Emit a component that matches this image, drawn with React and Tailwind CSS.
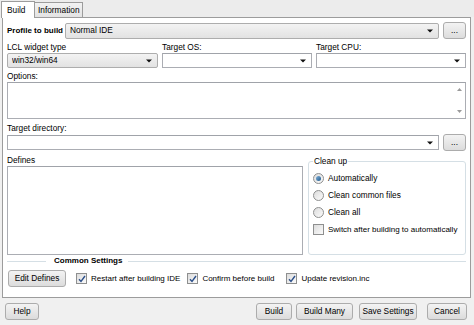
const FONT = { fontFamily: '"Liberation Sans", Arial, sans-serif' }

function Arrow() {
  return (
    <svg width="6" height="4" viewBox="0 0 6 4" className="shrink-0">
      <path d="M0 0.5h6L3 3.5z" fill="#111" />
    </svg>
  )
}

function Combo({ value, gray, className = '' }) {
  return (
    <div
      className={
        'flex items-center pl-[4px] pr-[5px] border text-[8.3px] text-black ' +
        (gray
          ? 'border-[#adadad] bg-gradient-to-b from-[#f3f3f3] to-[#e2e2e2] rounded-[2px] '
          : 'border-[#abadb3] border-t-[#a0a3a9] bg-white ') +
        className
      }
    >
      <span className="flex-1 leading-none truncate">{value}</span>
      <Arrow />
    </div>
  )
}

function Btn({ children, className = '' }) {
  return (
    <div
      className={
        'h-[17px] flex items-center justify-center border border-[#acacac] rounded-[3px] bg-gradient-to-b from-[#f3f3f3] to-[#dcdcdc] text-[8.3px] text-black leading-none ' +
        className
      }
    >
      {children}
    </div>
  )
}

function Radio({ checked, label }) {
  return (
    <div className="flex items-center gap-[4px] h-[17px]">
      <div className="w-[11px] h-[11px] rounded-full border border-[#8e8f8f] bg-gradient-to-br from-[#dcdcdc] to-[#fbfbfb] flex items-center justify-center">
        {checked && <div className="w-[5px] h-[5px] rounded-full bg-gradient-to-br from-[#7fb0d8] to-[#1f5a8c]" />}
      </div>
      <span className="text-[8.3px] text-black leading-none">{label}</span>
    </div>
  )
}

function Check({ label, checked }) {
  return (
    <div className="flex items-center gap-[4px]">
      <div className="w-[11px] h-[11px] border border-[#8e8f8f] bg-gradient-to-br from-[#dcdcdc] to-[#fbfbfb] flex items-center justify-center">
        {checked && (
          <svg width="8" height="8" viewBox="0 0 8 8">
            <path d="M1 4.3l2 2.2L7 1" fill="none" stroke="#2b4f8a" strokeWidth="1.4" />
          </svg>
        )}
      </div>
      <span className="text-[8px] text-black leading-none whitespace-nowrap">{label}</span>
    </div>
  )
}

function ScrollArrows() {
  return (
    <div className="w-[11px] flex flex-col justify-between items-center py-[5px]">
      <svg width="5" height="3" viewBox="0 0 5 3">
        <path d="M0 3h5L2.5 0z" fill="#9a9a9a" />
      </svg>
      <svg width="5" height="3" viewBox="0 0 5 3">
        <path d="M0 0h5L2.5 3z" fill="#9a9a9a" />
      </svg>
    </div>
  )
}

export default function App() {
  return (
    <div className="w-[474px] h-[325px] bg-[#f0f0f0] flex flex-col overflow-hidden" style={FONT}>
      {/* tabs */}
      <div className="h-[17px] flex items-end pl-[1px] bg-[#ececec]">
        <div className="h-[17px] w-[34px] bg-white border border-b-0 border-[#9c9c9c] flex items-center pl-[5px] text-[8.3px] text-black -mb-px relative z-10">
          Build
        </div>
        <div className="h-[15px] w-[48px] bg-gradient-to-b from-[#f2f2f2] to-[#e3e3e3] border border-l-0 border-b-0 border-[#9c9c9c] flex items-center pl-[3px] text-[8.3px] text-black">
          Information
        </div>
      </div>

      {/* panel */}
      <div className="h-[281px] ml-[2px] mr-[3px] bg-white border border-[#9c9c9c] px-[4px] pt-[4px] flex flex-col">
        <div className="flex items-center">
          <span className="text-[8px] font-bold text-black w-[58px]">Profile to build</span>
          <Combo value="Normal IDE" gray className="flex-1 h-[16px]" />
          <Btn className="w-[23px] h-[16px] ml-[4px] text-[#666]">...</Btn>
        </div>

        <div className="grid grid-cols-[151px_150px_1fr] gap-x-[4px] mt-[2px]">
          <span className="text-[8.3px] text-black h-[12px] leading-[12px]">LCL widget type</span>
          <span className="text-[8.3px] text-black h-[12px] leading-[12px]">Target OS:</span>
          <span className="text-[8.3px] text-black h-[12px] leading-[12px]">Target CPU:</span>
          <Combo value="win32/win64" gray className="h-[15px]" />
          <Combo value="" className="h-[15px]" />
          <Combo value="" className="h-[15px]" />
        </div>

        <span className="text-[8.3px] text-black mt-[2px] h-[12px] leading-[12px]">Options:</span>
        <div className="h-[37px] border border-[#abadb3] border-t-[#a0a3a9] bg-white flex justify-end">
          <ScrollArrows />
        </div>

        <span className="text-[8.3px] text-black mt-[3px] h-[12px] leading-[12px]">Target directory:</span>
        <div className="flex items-center">
          <Combo value="" className="flex-1 h-[15px]" />
          <Btn className="w-[23px] h-[16px] ml-[4px] text-[#666]">...</Btn>
        </div>

        <div className="flex gap-[5px] mt-[3px]">
          <div className="w-[296px] flex flex-col">
            <span className="text-[8.3px] text-black h-[12px] leading-[12px]">Defines</span>
            <div className="h-[89px] border border-[#abadb3] border-t-[#a0a3a9] bg-white" />
          </div>
          <div className="flex-1 relative mt-[7px] h-[94px] border border-[#d5dfe5] rounded-[3px] px-[4px] pt-[8px]">
            <span className="absolute -top-[7px] left-[4px] bg-white px-[1px] text-[8.3px] leading-[12px] text-black">Clean up</span>
            <Radio checked label="Automatically" />
            <Radio label="Clean common files" />
            <Radio label="Clean all" />
            <div className="h-[17px] flex items-center">
              <Check label="Switch after building to automatically" />
            </div>
          </div>
        </div>

        <div className="flex items-center h-[12px]">
          <div className="w-[39px] h-px bg-[#d5dfe5]" />
          <span className="text-[8px] font-bold text-black pl-[8px] pr-[6px] leading-none">Common Settings</span>
          <div className="flex-1 h-px bg-[#d5dfe5]" />
        </div>

        <div className="flex items-center mt-[3px]">
          <Btn className="w-[58px] ml-px">Edit Defines</Btn>
          <div className="ml-[10px]">
            <Check checked label="Restart after building IDE" />
          </div>
          <div className="ml-[7px]">
            <Check checked label="Confirm before build" />
          </div>
          <div className="ml-[12px]">
            <Check checked label="Update revision.inc" />
          </div>
        </div>
      </div>

      {/* bottom buttons */}
      <div className="flex items-start h-[27px] px-[5px] pt-[5px]">
        <Btn className="w-[34px]">Help</Btn>
        <div className="flex-1" />
        <Btn className="w-[36px]">Build</Btn>
        <Btn className="w-[57px] ml-[4px]">Build Many</Btn>
        <Btn className="w-[58px] ml-[6px]">Save Settings</Btn>
        <Btn className="w-[40px] ml-[10px] mr-[2px]">Cancel</Btn>
      </div>
    </div>
  )
}
